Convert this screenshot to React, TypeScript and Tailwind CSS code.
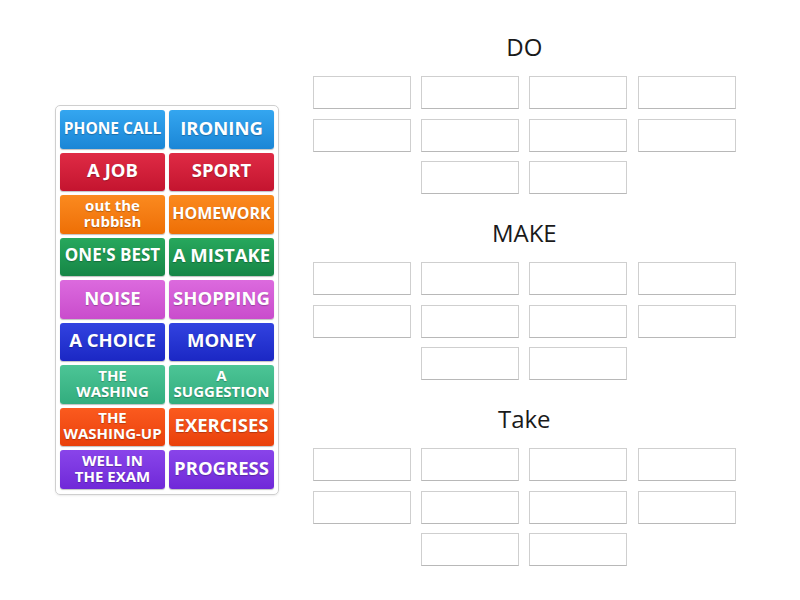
const tiles: { label: string; color: string; size: string }[] = [
  { label: "PHONE CALL", color: "blue", size: "text-[15.5px]" },
  { label: "IRONING", color: "blue", size: "text-[18.5px]" },
  { label: "A JOB", color: "red", size: "text-[18.5px]" },
  { label: "SPORT", color: "red", size: "text-[18.5px]" },
  { label: "out the rubbish", color: "orange", size: "text-[15px]" },
  { label: "HOMEWORK", color: "orange", size: "text-[16px]" },
  { label: "ONE'S BEST", color: "green", size: "text-[17px]" },
  { label: "A MISTAKE", color: "green", size: "text-[18.5px]" },
  { label: "NOISE", color: "pink", size: "text-[18.5px]" },
  { label: "SHOPPING", color: "pink", size: "text-[18.5px]" },
  { label: "A CHOICE", color: "navy", size: "text-[18.5px]" },
  { label: "MONEY", color: "navy", size: "text-[18.5px]" },
  { label: "THE WASHING", color: "teal", size: "text-[15px]" },
  { label: "A SUGGESTION", color: "teal", size: "text-[15px]" },
  { label: "THE WASHING-UP", color: "scarlet", size: "text-[15px]" },
  { label: "EXERCISES", color: "scarlet", size: "text-[18.5px]" },
  { label: "WELL IN THE EXAM", color: "purple", size: "text-[15px] px-[14px]" },
  { label: "PROGRESS", color: "purple", size: "text-[18.5px]" },
];

// full class names so tailwind picks them up
const colorClass: Record<string, string> = {
  blue: "bg-gradient-to-b from-[#34a6f0] to-[#1a86d6]",
  red: "bg-gradient-to-b from-[#df2a45] to-[#c4142f]",
  orange: "bg-gradient-to-b from-[#fb8a1e] to-[#ee6f04]",
  green: "bg-gradient-to-b from-[#27a85d] to-[#168646]",
  pink: "bg-gradient-to-b from-[#dc6ade] to-[#c94ccc]",
  navy: "bg-gradient-to-b from-[#3242e0] to-[#1b27c4]",
  teal: "bg-gradient-to-b from-[#4cc596] to-[#32ad7e]",
  scarlet: "bg-gradient-to-b from-[#fb5a1e] to-[#e9400a]",
  purple: "bg-gradient-to-b from-[#8944ea] to-[#7028d8]",
};

const Tile = ({ label, color, size }: { label: string; color: string; size: string }) => (
  <div
    className={`${colorClass[color]} h-[38.5px] rounded-[3px] flex items-center justify-center text-center px-[2px] pb-[3px] font-bold leading-[16px] text-white [text-shadow:0_1px_1px_rgba(0,0,0,0.25)] shadow-[0_1px_1px_rgba(0,0,0,0.25)] ${size}`}
  >
    {label}
  </div>
);

const Slot = ({ className = "" }: { className?: string }) => (
  <div className={`h-[33px] border border-[#cfcfcf] border-b-[#b8b8b8] bg-white ${className}`} />
);

const Group = ({ title }: { title: string }) => (
  <section className="flex flex-col">
    <h2 className="h-[30px] text-center text-[24px] leading-[30px] text-[#1a1a1a] mb-[14px]">{title}</h2>
    <div className="grid grid-cols-[repeat(4,98px)] gap-x-[10.2px] gap-y-[9.5px]">
      {Array.from({ length: 8 }).map((_, i) => (
        <Slot key={i} />
      ))}
      <Slot className="col-start-2" />
      <Slot />
    </div>
  </section>
);

export default function App() {
  return (
    <div
      className="w-[800px] h-[600px] bg-white flex items-start"
      style={{ fontFamily: '"Open Sans", "Liberation Sans", sans-serif' }}
    >
      {/* ── word bank ── */}
      <div className="ml-[55px] mt-[105px] w-[224px] h-[390px] border border-[#cfcfcf] rounded-[5px] p-[4px] shadow-[0_1px_2px_rgba(0,0,0,0.08)]">
        <div className="grid grid-cols-[105px_105px] gap-x-[4px] gap-y-[4px]">
          {tiles.map((t) => (
            <Tile key={t.label} {...t} />
          ))}
        </div>
      </div>

      {/* ── groups ── */}
      <div className="ml-[34px] mt-[32px] flex flex-col gap-[24px]">
        <Group title="DO" />
        <Group title="MAKE" />
        <Group title="Take" />
      </div>
    </div>
  );
}
